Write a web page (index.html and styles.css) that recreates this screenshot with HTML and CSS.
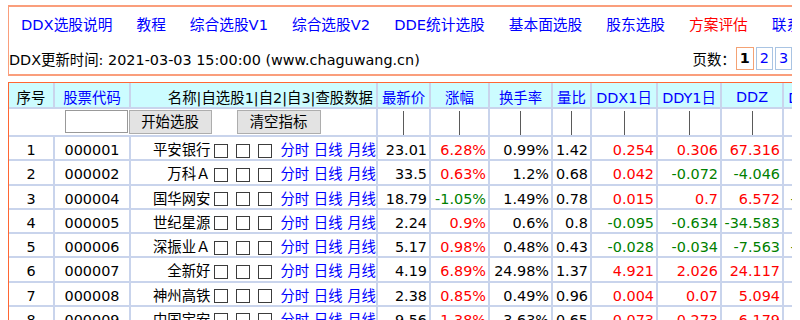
FILE: index.html
```html
<!DOCTYPE html>
<html lang="zh-CN">
<head>
<meta charset="utf-8">
<title>DDX选股</title>
<link rel="stylesheet" href="styles.css">
</head>
<body>
<div class="topbox">
  <nav class="nav">
    <a href="#">DDX选股说明</a>
    <a href="#">教程</a>
    <a href="#">综合选股V1</a>
    <a href="#">综合选股V2</a>
    <a href="#">DDE统计选股</a>
    <a href="#">基本面选股</a>
    <a href="#">股东选股</a>
    <a class="hot" href="#">方案评估</a>
    <a href="#">联系我们</a>
  </nav>
  <div class="info">
    <span class="upd">DDX更新时间: 2021-03-03 15:00:00 (www.chaguwang.cn)</span>
    <div class="pager">
      <span class="plabel">页数：</span>
      <b class="pg cur">1</b><a class="pg" href="#">2</a><a class="pg" href="#">3</a><a class="pg" href="#">4</a><a class="pg" href="#">5</a><a class="pg" href="#">6</a><a class="pg" href="#">7</a><a class="pg" href="#">8</a><a class="pg" href="#">9</a>
    </div>
  </div>
</div>

<table class="grid">
  <thead>
    <tr class="head">
      <th class="c1">序号</th>
      <th class="c2 lk">股票代码</th>
      <th class="c3 nameh">名称|自选股1|自2|自3|查股数据</th>
      <th class="c4 lk">最新价</th>
      <th class="c5 lk">涨幅</th>
      <th class="c6 lk">换手率</th>
      <th class="c7 lk">量比</th>
      <th class="c8 lk">DDX1日</th>
      <th class="c9 lk">DDY1日</th>
      <th class="c10 lk">DDZ</th>
      <th class="c11 lk">DDX5日</th>
      <th class="c12 lk">DDY5日</th>
    </tr>
    <tr class="filter">
      <td colspan="3" class="fcell">
        <div class="tools"><input class="codein" type="text"><button class="btn">开始选股</button><button class="btn clear">清空指标</button></div>
      </td>
      <td class="f"><div class="split"></div></td>
      <td class="f"><div class="split"></div></td>
      <td class="f"><div class="split"></div></td>
      <td class="f"><div class="split"></div></td>
      <td class="f"><div class="split"></div></td>
      <td class="f"><div class="split"></div></td>
      <td class="f"><div class="split"></div></td>
      <td class="f"><div class="split"></div></td>
      <td class="f"><div class="split"></div></td>
    </tr>
  </thead>
  <tbody>
    <tr>
      <td class="ctr">1</td><td class="ctr">000001</td>
      <td class="name"><div class="nm"><span class="sn">平安银行</span><input class="cb" type="checkbox"><input class="cb" type="checkbox"><input class="cb" type="checkbox"><span class="lks"><a href="#">分时</a> <a href="#">日线</a> <a href="#">月线</a></span></div></td>
      <td>23.01</td><td class="up">6.28%</td><td>0.99%</td><td>1.42</td><td class="up">0.254</td><td class="up">0.306</td><td class="up">67.316</td><td class="up">1.205</td><td class="up">0.518</td>
    </tr>
    <tr>
      <td class="ctr">2</td><td class="ctr">000002</td>
      <td class="name"><div class="nm"><span class="sn">万科Ａ</span><input class="cb" type="checkbox"><input class="cb" type="checkbox"><input class="cb" type="checkbox"><span class="lks"><a href="#">分时</a> <a href="#">日线</a> <a href="#">月线</a></span></div></td>
      <td>33.5</td><td class="up">0.63%</td><td>1.2%</td><td>0.68</td><td class="up">0.042</td><td class="dn">-0.072</td><td class="dn">-4.046</td><td class="up">0.317</td><td class="dn">-0.21</td>
    </tr>
    <tr>
      <td class="ctr">3</td><td class="ctr">000004</td>
      <td class="name"><div class="nm"><span class="sn">国华网安</span><input class="cb" type="checkbox"><input class="cb" type="checkbox"><input class="cb" type="checkbox"><span class="lks"><a href="#">分时</a> <a href="#">日线</a> <a href="#">月线</a></span></div></td>
      <td>18.79</td><td class="dn">-1.05%</td><td>1.49%</td><td>0.78</td><td class="up">0.015</td><td class="up">0.7</td><td class="up">6.572</td><td class="dn">-12.345</td><td class="dn">-1.83</td>
    </tr>
    <tr>
      <td class="ctr">4</td><td class="ctr">000005</td>
      <td class="name"><div class="nm"><span class="sn">世纪星源</span><input class="cb" type="checkbox"><input class="cb" type="checkbox"><input class="cb" type="checkbox"><span class="lks"><a href="#">分时</a> <a href="#">日线</a> <a href="#">月线</a></span></div></td>
      <td>2.24</td><td class="up">0.9%</td><td>0.6%</td><td>0.8</td><td class="dn">-0.095</td><td class="dn">-0.634</td><td class="dn">-34.583</td><td class="up">0.112</td><td class="up">0.09</td>
    </tr>
    <tr>
      <td class="ctr">5</td><td class="ctr">000006</td>
      <td class="name"><div class="nm"><span class="sn">深振业Ａ</span><input class="cb" type="checkbox"><input class="cb" type="checkbox"><input class="cb" type="checkbox"><span class="lks"><a href="#">分时</a> <a href="#">日线</a> <a href="#">月线</a></span></div></td>
      <td>5.17</td><td class="up">0.98%</td><td>0.48%</td><td>0.43</td><td class="dn">-0.028</td><td class="dn">-0.034</td><td class="dn">-7.563</td><td class="dn">-2.0417</td><td class="dn">-0.44</td>
    </tr>
    <tr>
      <td class="ctr">6</td><td class="ctr">000007</td>
      <td class="name"><div class="nm"><span class="sn">全新好</span><input class="cb" type="checkbox"><input class="cb" type="checkbox"><input class="cb" type="checkbox"><span class="lks"><a href="#">分时</a> <a href="#">日线</a> <a href="#">月线</a></span></div></td>
      <td>4.19</td><td class="up">6.89%</td><td>24.98%</td><td>1.37</td><td class="up">4.921</td><td class="up">2.026</td><td class="up">24.117</td><td class="up">3.214</td><td class="up">1.52</td>
    </tr>
    <tr>
      <td class="ctr">7</td><td class="ctr">000008</td>
      <td class="name"><div class="nm"><span class="sn">神州高铁</span><input class="cb" type="checkbox"><input class="cb" type="checkbox"><input class="cb" type="checkbox"><span class="lks"><a href="#">分时</a> <a href="#">日线</a> <a href="#">月线</a></span></div></td>
      <td>2.38</td><td class="up">0.85%</td><td>0.49%</td><td>0.96</td><td class="up">0.004</td><td class="up">0.07</td><td class="up">5.094</td><td class="up">0.205</td><td class="up">0.11</td>
    </tr>
    <tr>
      <td class="ctr">8</td><td class="ctr">000009</td>
      <td class="name"><div class="nm"><span class="sn">中国宝安</span><input class="cb" type="checkbox"><input class="cb" type="checkbox"><input class="cb" type="checkbox"><span class="lks"><a href="#">分时</a> <a href="#">日线</a> <a href="#">月线</a></span></div></td>
      <td>9.56</td><td class="up">1.38%</td><td>3.63%</td><td>0.65</td><td class="up">0.073</td><td class="up">0.273</td><td class="up">6.179</td><td class="up">0.386</td><td class="up">0.25</td>
    </tr>
  </tbody>
</table>
</body>
</html>
```

FILE: styles.css
```css
html {
  overflow: hidden;
}

body {
  margin: 5px 8px 0 8px;
  font-family: "DejaVu Sans", Verdana, "Noto Sans CJK SC", sans-serif;
  font-size: 14.4px;
  color: #000;
  background: #fff;
}

a {
  color: #0000ff;
  text-decoration: none;
}

/* ---------- top box ---------- */
.topbox {
  box-sizing: border-box;
  width: 902px;
  border: 2px solid #fa9e7c;
  border-left-width: 1px;
  border-right-width: 1px;
  padding-bottom: 4px;
}

.nav {
  display: flex;
  padding-top: 6px;
  height: 24px;
  line-height: 24px;
  font-size: 14.7px;
  white-space: nowrap;
}

.nav a {
  padding: 0 12px;
}

.nav a.hot {
  color: #ff0000;
}

.info {
  display: flex;
  align-items: center;
  height: 24px;
  margin-top: 9px;
  padding-right: 2px;
  white-space: nowrap;
}

.pager {
  margin-left: auto;
  display: flex;
  align-items: center;
  gap: 2px;
}

.plabel {
  margin-right: -2px;
}

.pg {
  box-sizing: border-box;
  height: 23px;
  line-height: 21px;
  padding: 0 3px;
  border: 1px solid #a9c4e3;
  color: #0000ff;
}

.pg.cur {
  border-color: #f4a274;
  color: #000;
  font-weight: bold;
}

/* ---------- grid ---------- */
.grid {
  box-sizing: border-box;
  table-layout: fixed;
  border-collapse: separate;
  border-spacing: 0;
  width: 908px;
  margin-top: 6px;
  border-top: 1px solid #ff6633;
  border-left: 1px solid #ff6633;
}

.grid th,
.grid td {
  box-sizing: border-box;
  border-right: 2px solid #c9d4ec;
  border-bottom: 2px solid #c9d4ec;
  white-space: nowrap;
  overflow: hidden;
  font-weight: normal;
}

.c1 { width: 46px; }
.c2 { width: 76px; }
.c3 { width: 247px; }
.c4 { width: 53px; }
.c5 { width: 59px; }
.c6 { width: 63px; }
.c7 { width: 39px; }
.c8 { width: 66px; }
.c9 { width: 64px; }
.c10 { width: 62px; }
.c11 { width: 66px; }
.c12 { width: 66px; }

.head {
  height: 24px;
}

.head th {
  background: #ccfcff;
  padding: 3px 0 0 0;
  text-align: center;
  vertical-align: middle;
  color: #000;
}

.head th.lk {
  color: #0000ff;
}

.head th.nameh {
  text-align: right;
  padding-right: 3px;
}

.filter {
  height: 27px;
}

.filter td {
  padding: 0;
  vertical-align: top;
}

.tools {
  display: flex;
  justify-content: center;
  align-items: flex-start;
  padding-top: 1px;
}

.codein {
  box-sizing: border-box;
  width: 63px;
  height: 23px;
  margin: 0 1px 0 0;
  padding: 0 2px;
  border: 1px solid #999;
  background: #fff;
  font: inherit;
}

.btn {
  box-sizing: border-box;
  width: 83px;
  height: 24px;
  margin: 0;
  padding: 0;
  border: 1px solid #adadad;
  background: #e3e3e3;
  color: #000;
  font-family: "DejaVu Sans", "Noto Sans CJK SC", sans-serif;
  font-size: 14.4px;
  line-height: 22px;
}

.btn.clear {
  width: 84px;
  margin-left: 25px;
}

.split {
  width: 1px;
  height: 24px;
  margin: 2px auto 0 auto;
  background: #5a5a5a;
}

tbody tr {
  height: 24.25px;
}

tbody td {
  padding: 4px 2px 0 0;
  text-align: right;
  vertical-align: middle;
  line-height: 18px;
}

tbody td.ctr {
  text-align: center;
  padding-right: 0;
}

tbody td.up {
  color: #ff0000;
}

tbody td.dn {
  color: #008000;
}

tbody td.name {
  padding-right: 0;
}

.nm {
  display: flex;
  justify-content: flex-end;
  align-items: center;
}

.sn {
  margin-right: 4px;
}

.cb {
  -webkit-appearance: none;
  appearance: none;
  box-sizing: border-box;
  width: 14px;
  height: 14px;
  margin: 1px 0 0 8px;
  border: 1px solid #3c3c3c;
  background: #fff;
  border-radius: 0;
}

.sn + .cb {
  margin-left: 0;
}

.lks {
  margin-left: 8px;
}
```
